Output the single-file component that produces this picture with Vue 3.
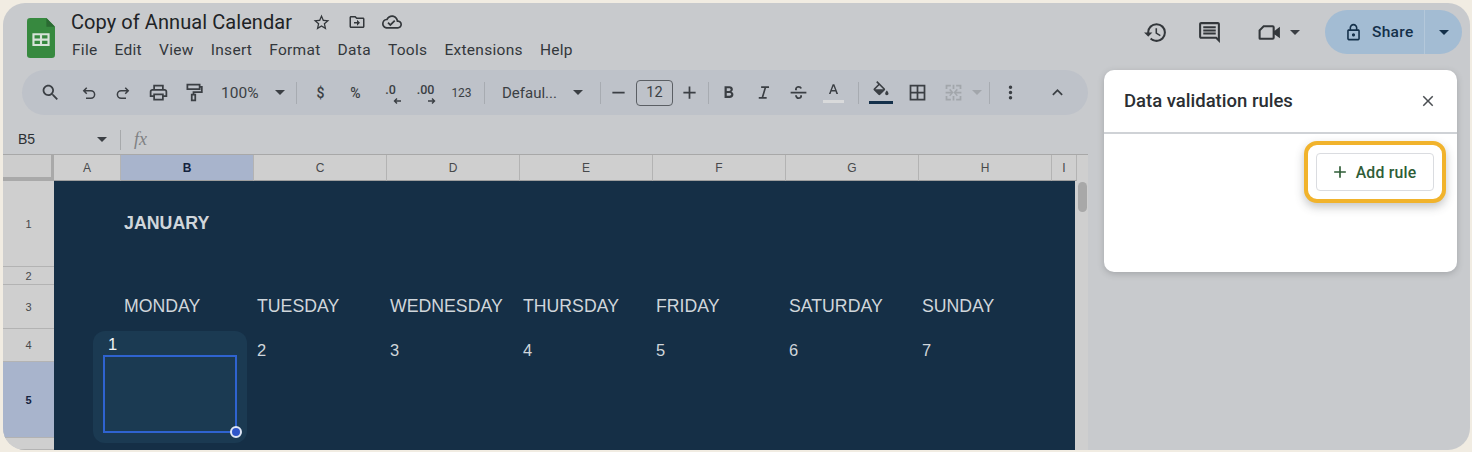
<template>
  <div class="screen">
    <div class="window">
      <!-- Title bar -->
      <header class="top">
        <svg class="logo" viewBox="0 0 26 37">
          <path d="M3 0h15l8 8v26a3 3 0 0 1-3 3H3a3 3 0 0 1-3-3V3a3 3 0 0 1 3-3z" fill="#37893f" />
          <path d="M18 0l8 8h-8z" fill="#2a6a32" />
          <path d="M6 15h14v10H6z" fill="none" stroke="#d8e3d9" stroke-width="2" />
          <path d="M13 15v10M6 20h14" stroke="#d8e3d9" stroke-width="2" />
        </svg>
        <div class="doc">
          <div class="title-row">
            <span class="title">Copy of Annual Calendar</span>
            <svg class="t-ic star" viewBox="0 0 24 24"><path :d="icons.star" /></svg>
            <svg class="t-ic move" viewBox="0 0 24 24"><path :d="icons.move" /></svg>
            <svg class="t-ic cloud" viewBox="0 0 24 24"><path :d="icons.cloud" /></svg>
          </div>
          <nav class="menu">
            <span v-for="m in menu" :key="m">{{ m }}</span>
          </nav>
        </div>
        <div class="actions">
          <svg class="a-ic" viewBox="0 0 24 24"><path :d="icons.history" /></svg>
          <svg class="a-ic comment" viewBox="0 0 24 24"><path :d="icons.comment" /></svg>
          <svg class="a-ic video" viewBox="0 0 24 24"><path :d="icons.video" /></svg>
          <i class="caret video-caret"></i>
          <div class="share">
            <div class="share-main">
              <svg class="lock" viewBox="0 0 24 24"><path :d="icons.lock" /></svg>
              <span>Share</span>
            </div>
            <div class="share-more"><i class="caret dark"></i></div>
          </div>
        </div>
      </header>

      <div class="main">
        <div class="left">
          <!-- Toolbar -->
          <div class="toolbar">
            <template v-for="(t, i) in tools" :key="i">
              <span v-if="t.sep" class="sep" :style="{ marginLeft: t.ml + 'px' }"></span>
              <span v-else class="tool" :class="t.cls" :style="{ width: (t.w || 35) + 'px', marginLeft: (t.ml || 0) + 'px' }">
                <svg v-if="t.icon" class="tool-ic" :class="t.icon" viewBox="0 0 24 24">
                  <path v-if="icons[t.icon]" :d="icons[t.icon]" />
                  <path v-if="strokes[t.icon]" :d="strokes[t.icon]" class="st" />
                </svg>
                <i v-else-if="t.caret" class="caret" :class="{ dim: t.dim }"></i>
                <template v-else>{{ t.text }}</template>
                <svg v-if="t.arrow" class="dec-arrow" viewBox="0 0 10 8">
                  <path :d="t.arrow" />
                </svg>
              </span>
            </template>
          </div>

          <!-- Formula bar -->
          <div class="formula">
            <span class="cell-name">B5</span>
            <i class="caret"></i>
            <span class="f-sep"></span>
            <span class="fx">fx</span>
          </div>

          <div class="sheet-wrap">
            <div class="grid">
              <div class="corner"></div>
              <div v-for="c in columns" :key="c" class="col-head" :class="{ active: c === 'B' }">{{ c }}</div>

              <div
                v-for="r in rows"
                :key="r.label"
                class="row-head"
                :class="{ active: r.label === '5' }"
                :style="{ gridRow: r.line }"
              >{{ r.label }}</div>

              <div class="sheet">
                <div class="month">JANUARY</div>
                <div v-for="(d, i) in days" :key="d" class="day" :style="{ gridColumn: i + 2 }">{{ d }}</div>
                <div v-for="n in dates" :key="n" class="date" :style="{ gridColumn: n + 1 }">{{ n }}</div>

                <div class="picked">
                  <span class="picked-num">1</span>
                  <div class="picked-box"><i class="handle"></i></div>
                </div>
              </div>
            </div>
            <div class="scrollbar"><i></i></div>
          </div>
        </div>

        <!-- Side panel -->
        <aside class="side">
          <div class="panel">
            <div class="panel-head">
              <span>Data validation rules</span>
              <svg class="close" viewBox="0 0 24 24"><path :d="icons.close" /></svg>
            </div>
            <div class="panel-body">
              <div class="callout">
                <button class="add">
                  <svg viewBox="0 0 24 24"><path d="M11 5h2v6h6v2h-6v6h-2v-6H5v-2h6z" /></svg>
                  Add rule
                </button>
              </div>
            </div>
          </div>
        </aside>
      </div>
    </div>
  </div>
</template>

<script setup>
const menu = ['File', 'Edit', 'View', 'Insert', 'Format', 'Data', 'Tools', 'Extensions', 'Help']
const columns = ['A', 'B', 'C', 'D', 'E', 'F', 'G', 'H', 'I']
const days = ['MONDAY', 'TUESDAY', 'WEDNESDAY', 'THURSDAY', 'FRIDAY', 'SATURDAY', 'SUNDAY']
const dates = [2, 3, 4, 5, 6, 7]
const rows = [
  { label: '1', line: 2 },
  { label: '2', line: 3 },
  { label: '3', line: 4 },
  { label: '4', line: 5 },
  { label: '5', line: 6 },
  { label: '', line: 7 }
]

const icons = {
  star: 'M22 9.24l-7.19-.62L12 2 9.19 8.63 2 9.24l5.46 4.73L5.82 21 12 17.27 18.18 21l-1.63-7.03L22 9.24zM12 15.4l-3.76 2.27 1-4.28-3.32-2.88 4.38-.38L12 6.1l1.71 4.04 4.38.38-3.32 2.88 1 4.28L12 15.4z',
  move: 'M20 6h-8l-2-2H4c-1.1 0-2 .9-2 2v12c0 1.1.9 2 2 2h16c1.1 0 2-.9 2-2V8c0-1.1-.9-2-2-2zm0 12H4V6h5.17l2 2H20v10zm-8-1l4-4-4-4v3H8v2h4v3z',
  cloud: 'M19.35 10.04C18.67 6.59 15.64 4 12 4 9.11 4 6.6 5.64 5.35 8.04 2.34 8.36 0 10.91 0 14c0 3.31 2.69 6 6 6h13c2.76 0 5-2.24 5-5 0-2.64-2.05-4.78-4.65-4.96zM19 18H6c-2.21 0-4-1.79-4-4 0-2.05 1.53-3.76 3.56-3.97l1.07-.11.5-.95C8.08 7.14 9.94 6 12 6c2.62 0 4.88 1.86 5.39 4.43l.3 1.5 1.53.11c1.56.1 2.78 1.41 2.78 2.96 0 1.65-1.35 3-3 3zm-9-3.82l-2.09-2.09L6.5 13.5 10 17l6.01-6.01-1.41-1.41z',
  history: 'M13 3a9 9 0 0 0-9 9H1l3.89 3.89.07.14L9 12H6c0-3.87 3.13-7 7-7s7 3.13 7 7-3.13 7-7 7c-1.93 0-3.68-.79-4.94-2.06l-1.42 1.42A8.954 8.954 0 0 0 13 21a9 9 0 0 0 0-18zm-1 5v5l4.28 2.54.72-1.21-3.5-2.08V8H12z',
  comment: 'M20 2H4c-1.1 0-2 .9-2 2v12c0 1.1.9 2 2 2h14l4 4V4c0-1.1-.9-2-2-2zm0 15.17L18.83 16H4V4h16v13.17zM6 12h12v2H6zm0-3h12v2H6zm0-3h12v2H6z',
  video: 'M6 5h9a2 2 0 0 1 2 2v3.2L22 6.5v11L17 13.8V17a2 2 0 0 1-2 2H3a1.5 1.5 0 0 1-1.5-1.5V9.5zM6.8 7 3.5 10.3V17H15V7z',
  lock: 'M18 8h-1V6c0-2.76-2.24-5-5-5S7 3.24 7 6v2H6c-1.1 0-2 .9-2 2v10c0 1.1.9 2 2 2h12c1.1 0 2-.9 2-2V10c0-1.1-.9-2-2-2zM9 6c0-1.66 1.34-3 3-3s3 1.34 3 3v2H9V6zm9 14H6V10h12v10zm-6-3c1.1 0 2-.9 2-2s-.9-2-2-2-2 .9-2 2 .9 2 2 2z',
  close: 'M19 6.41 17.59 5 12 10.59 6.41 5 5 6.41 10.59 12 5 17.59 6.41 19 12 13.41 17.59 19 19 17.59 13.41 12z',
  search: 'M15.5 14h-.79l-.28-.27C15.41 12.59 16 11.11 16 9.5 16 5.91 13.09 3 9.5 3S3 5.91 3 9.5 5.91 16 9.5 16c1.61 0 3.09-.59 4.23-1.57l.27.28v.79l5 4.99L20.49 19l-4.99-5zm-6 0C7.01 14 5 11.99 5 9.5S7.01 5 9.5 5 14 7.01 14 9.5 11.99 14 9.5 14z',
  print: 'M19 8h-1V3H6v5H5c-1.66 0-3 1.34-3 3v6h4v4h12v-4h4v-6c0-1.66-1.34-3-3-3zM8 5h8v3H8V5zm8 12v2H8v-4h8v2zm2-2v-2H6v2H4v-4c0-.55.45-1 1-1h14c.55 0 1 .45 1 1v4h-2z',
  minus: 'M5 11h14v2H5z',
  plus: 'M11 5h2v6h6v2h-6v6h-2v-6H5v-2h6z',
  bold: 'M7 4h6.2c2.6 0 4.3 1.5 4.3 3.8 0 1.4-.7 2.5-1.8 3.1 1.5.5 2.5 1.8 2.5 3.5 0 2.6-1.9 4.6-4.8 4.6H7zm2.8 2.5v3.6h3c1.2 0 1.9-.8 1.9-1.8s-.7-1.8-1.9-1.8zm0 6v3.5h3.4c1.4 0 2.2-.8 2.2-1.8s-.8-1.7-2.2-1.7z',
  italic: 'M9 4h10v2.4h-3.7l-3.4 11.2H16V20H6v-2.4h3.7l3.4-11.2H9z',
  strike: 'M3 11h18v2H3zM8.2 9.5c-.1-.3-.2-.7-.2-1C8 6 9.8 4.5 12.1 4.5c1.9 0 3.3 1 3.8 2.6l-1.9.7c-.3-.8-1-1.3-1.9-1.3-1.1 0-2 .6-2 1.6 0 .5.1.9.4 1.4zM8 15h2.2c.1 1.4 1 2.5 2 2.5s1.8-.7 1.8-1.6c0-.3-.1-.6-.2-.9h2.1c.1.3.2.7.2 1 0 2.1-1.6 3.5-4 3.5-2.3 0-3.9-1.8-4.1-4.5z',
  textA: 'M10.9 3h2.2l5 13h-2.3l-1.1-3.2H9.2L8.1 16H5.9zm-1 7.8h4.2L12 5.2z',
  fill: 'M16.56 8.94 7.62 0 6.21 1.41l2.38 2.38-5.15 5.15c-.59.59-.59 1.54 0 2.12l5.5 5.5c.29.29.68.44 1.06.44s.77-.15 1.06-.44l5.5-5.5c.59-.58.59-1.53 0-2.12zM5.21 10 10 5.21 14.79 10H5.21zM19 11.5s-2 2.17-2 3.5c0 1.1.9 2 2 2s2-.9 2-2c0-1.33-2-3.5-2-3.5z',
  borders: 'M3 3v18h18V3H3zm8 16H5v-6h6v6zm0-8H5V5h6v6zm8 8h-6v-6h6v6zm0-8h-6V5h6v6z',
  merge: 'M3 3h6v2H5v3H3zm12 0h6v5h-2V5h-4zM3 16h2v3h4v2H3zm16 0h2v5h-6v-2h4zM11 3h2v5h-2zm0 13h2v5h-2zM3 11h6l-2-2 1.2-1.2L12 12l-3.8 4.2L7 15l2-2H3zm18 2h-6l2 2-1.2 1.2L12 12l3.8-4.2L17 9l-2 2h6z',
  more: 'M12 8a2 2 0 1 0 0-4 2 2 0 0 0 0 4zm0 2a2 2 0 1 0 0 4 2 2 0 0 0 0-4zm0 6a2 2 0 1 0 0 4 2 2 0 0 0 0-4z',
  less: 'M12 8l-6 6 1.41 1.41L12 10.83l4.59 4.58L18 14z'
}

const strokes = {
  undo: 'M9 5 5 9l4 4M5 9h9.5a5 5 0 0 1 0 10H8',
  redo: 'M15 5l4 4-4 4M19 9H9.5a5 5 0 0 0 0 10H16',
  paint: 'M5 3h14v5H5zM19 5.5h2.5v6H12v3M10 14.5h4V21h-4z'
}

const leftArrow = 'M9 4H3M5 1.5 2.5 4 5 6.5'
const rightArrow = 'M1 4h6M5 1.5 7.5 4 5 6.5'

// widths and margins follow the spacing of the sheet toolbar
const tools = [
  { icon: 'search', ml: 0 },
  { icon: 'undo', ml: 3 },
  { icon: 'redo', ml: -1 },
  { icon: 'print', ml: 1 },
  { icon: 'paint' },
  { text: '100%', w: 40, ml: 10, cls: 'zoom' },
  { caret: true, w: 20, ml: 9 },
  { sep: true, ml: 6 },
  { text: '$', ml: 6, cls: 'fmt' },
  { text: '%', cls: 'fmt' },
  { text: '.0', cls: 'dec', arrow: leftArrow },
  { text: '.00', cls: 'dec', arrow: rightArrow },
  { text: '123', ml: 1, cls: 'num' },
  { sep: true, ml: 5 },
  { text: 'Defaul...', w: 60, ml: 17, cls: 'font' },
  { caret: true, w: 20, ml: 6 },
  { sep: true, ml: 12 },
  { icon: 'minus' },
  { text: '12', w: 37, cls: 'size' },
  { icon: 'plus', w: 32 },
  { sep: true, ml: 3 },
  { icon: 'bold', ml: 2 },
  { icon: 'italic' },
  { icon: 'strike' },
  { icon: 'textA' },
  { sep: true, ml: 7 },
  { icon: 'fill', ml: 4 },
  { icon: 'borders', ml: 2 },
  { icon: 'merge', ml: 1, cls: 'dimmed' },
  { caret: true, w: 12, dim: true },
  { sep: true, ml: 6 },
  { icon: 'more', ml: 3 },
  { icon: 'less', ml: 12 }
]
</script>

<style>
html, body {
  margin: 0;
  background: #f1ece2;
}
</style>

<style scoped>
.screen {
  box-sizing: border-box;
  width: 1472px;
  height: 452px;
  padding: 3px 2px 2px 3px;
  background: #f1ece2;
  overflow: hidden;
  font-family: Roboto, "Liberation Sans", sans-serif;
  color: #2b2f33;
}

.window {
  height: 100%;
  display: flex;
  flex-direction: column;
  background: #c8cacd;
  border-radius: 22px;
  overflow: hidden;
}

/* Title bar */
.top {
  flex: none;
  height: 67px;
  display: flex;
  align-items: flex-start;
}

.logo {
  width: 28px;
  height: 40px;
  margin: 15px 0 0 24px;
  flex: none;
}

.doc {
  margin-left: 16px;
  padding-top: 7px;
}

.title-row {
  display: flex;
  align-items: center;
  height: 24px;
}

.title {
  font-size: 20px;
  letter-spacing: 0.07px;
  color: #202326;
}

.t-ic {
  fill: #33373b;
  flex: none;
}

.star {
  width: 19px;
  height: 19px;
  margin-left: 20px;
}

.move {
  width: 18px;
  height: 18px;
  margin-left: 17px;
}

.cloud {
  width: 20px;
  height: 20px;
  margin-left: 16px;
}

.menu {
  display: flex;
  gap: 17px;
  margin: 7px 0 0 1px;
  font-size: 15.5px;
  letter-spacing: 0.3px;
  color: #33373b;
}

.actions {
  margin-left: auto;
  padding: 7px 8px 0 0;
  display: flex;
  align-items: center;
  height: 44px;
}

.a-ic {
  width: 25px;
  height: 25px;
  fill: #33373b;
  flex: none;
}

.comment {
  margin-left: 29px;
}

.video {
  margin-left: 35px;
}

.video-caret {
  margin: 0 25px 0 8px;
}

.caret {
  display: block;
  width: 0;
  height: 0;
  border: 5px solid transparent;
  border-top-color: #3b3f44;
  border-bottom: 0;
}

.caret.dark {
  border-top-color: #14304a;
}

.caret.dim {
  border-top-color: #a2a6ab;
}

.share {
  width: 137px;
  height: 44px;
  display: flex;
  background: #a3bcd3;
  border-radius: 22px;
  color: #14304a;
}

.share-main {
  width: 99px;
  display: flex;
  align-items: center;
  font-size: 15.5px;
  font-weight: 500;
  letter-spacing: 0.3px;
  border-right: 1px solid #b4c8da;
}

.lock {
  width: 19px;
  height: 19px;
  fill: #14304a;
  margin: 0 9px 0 19px;
}

.share-more {
  flex: 1;
  display: flex;
  align-items: center;
  justify-content: center;
}

/* Main area */
.main {
  flex: 1;
  min-height: 0;
  display: flex;
}

.left {
  width: 1085px;
  flex: none;
  display: flex;
  flex-direction: column;
}

.toolbar {
  flex: none;
  height: 45px;
  margin-left: 19px;
  padding-left: 11px;
  display: flex;
  align-items: center;
  background: #bec2c9;
  border-radius: 23px;
  color: #3b3f44;
}

.sep {
  flex: none;
  width: 1px;
  height: 22px;
  background: #a7abb1;
}

.tool {
  flex: none;
  position: relative;
  height: 28px;
  display: flex;
  align-items: center;
  justify-content: center;
  font-size: 15px;
}

.tool-ic {
  width: 21px;
  height: 21px;
  fill: #3b3f44;
}

.tool-ic .st {
  fill: none;
  stroke: #3b3f44;
  stroke-width: 2;
}

.tool-ic.undo,
.tool-ic.redo {
  width: 18px;
  height: 18px;
}

.zoom {
  font-size: 15.5px;
  justify-content: flex-start;
}

.fmt {
  font-size: 14px;
  font-weight: 500;
}

.num {
  font-size: 12px;
}

.dec {
  font-size: 12.5px;
  font-weight: 500;
  padding-bottom: 7px;
  box-sizing: border-box;
}

.dec-arrow {
  position: absolute;
  left: 19px;
  top: 18px;
  width: 10px;
  height: 8px;
  fill: none;
  stroke: #3b3f44;
  stroke-width: 1.4;
}

.font {
  justify-content: flex-start;
  white-space: nowrap;
}

.size {
  box-sizing: border-box;
  height: 26px;
  border: 1px solid #5b5f64;
  border-radius: 4px;
  font-size: 14.5px;
}

.dimmed .tool-ic {
  fill: #a2a6ab;
}

.tool-ic.textA {
  border-bottom: 3px solid #d9dadb;
  box-sizing: border-box;
}

.tool-ic.fill {
  border-bottom: 3px solid #14304a;
  box-sizing: content-box;
  width: 24px;
  height: 20px;
}

.tool-ic.bold,
.tool-ic.italic {
  width: 19px;
  height: 19px;
}

/* Formula bar */
.formula {
  flex: none;
  height: 29px;
  margin-top: 10px;
  display: flex;
  align-items: center;
  font-family: "Liberation Sans", sans-serif;
}

.cell-name {
  width: 94px;
  padding: 0 0 2px 15px;
  box-sizing: border-box;
  font-size: 14px;
  flex: none;
}

.f-sep {
  width: 1px;
  height: 20px;
  background: #a7a9ab;
  margin-left: 13px;
}

.fx {
  margin-left: 13px;
  font-family: "Liberation Serif", serif;
  font-style: italic;
  font-size: 18px;
  color: #7f8183;
}

/* Grid */
.sheet-wrap {
  flex: 1;
  min-height: 0;
  display: flex;
  overflow: hidden;
}

.grid {
  flex: none;
  display: grid;
  grid-template-columns: 51px 67px repeat(7, 133px) 25px;
  grid-template-rows: 26px 86px 18px 44px 33px 76px 1fr;
  background: #cfcfcf;
  font-family: "Liberation Sans", sans-serif;
  font-size: 12px;
  color: #47494b;
  border-top: 1px solid #a8a8a8;
  box-sizing: border-box;
}

.corner {
  box-sizing: border-box;
  background: #cdcdcd;
  border-right: 3px solid #a9a9a9;
  border-bottom: 4px solid #a9a9a9;
}

.col-head {
  display: flex;
  align-items: center;
  justify-content: center;
  border-right: 1px solid #b3b3b3;
  border-bottom: 1px solid #9e9e9e;
}

.col-head.active {
  background: #a8b4cc;
  color: #14233f;
  font-weight: 700;
}

.row-head {
  grid-column: 1;
  display: flex;
  align-items: center;
  justify-content: center;
  font-size: 11px;
  border-bottom: 1px solid #b3b3b3;
}

.row-head.active {
  background: #a8b4cc;
  color: #14233f;
  font-weight: 700;
}

.sheet {
  grid-column: 2 / -1;
  grid-row: 2 / -1;
  position: relative;
  display: grid;
  grid-template-columns: subgrid;
  grid-template-rows: subgrid;
  margin-right: 2px;
  background: #152f46;
  color: #d0d6db;
  font-size: 17.7px;
}

.month {
  grid-column: 2;
  grid-row: 1;
  align-self: center;
  padding: 0 0 2px 3px;
  font-size: 17.8px;
  font-weight: 700;
}

.day {
  grid-row: 3;
  align-self: center;
  padding: 0 0 1px 3px;
  white-space: nowrap;
}

.date {
  grid-row: 4;
  align-self: end;
  padding: 0 0 2px 3px;
  font-size: 16.5px;
}

.picked {
  position: absolute;
  left: 39px;
  top: 150px;
  width: 154px;
  height: 112px;
  box-sizing: border-box;
  padding: 3px 10px 0;
  background: #1b3a52;
  border-radius: 12px;
  display: flex;
  flex-direction: column;
  color: #f2f4f5;
  font-size: 16.5px;
}

.picked-num {
  height: 21px;
  line-height: 20px;
  padding-left: 5px;
}

.picked-box {
  position: relative;
  width: 134px;
  height: 78px;
  box-sizing: border-box;
  border: 2.5px solid #2f63d0;
}

.handle {
  position: absolute;
  right: -7px;
  bottom: -7px;
  width: 8px;
  height: 8px;
  background: #2f55c9;
  border: 2px solid #dfe6f5;
  border-radius: 50%;
}

.scrollbar {
  flex: 1;
  background: #cfcfcf;
  padding: 1px 1px 0;
  border-top: 1px solid #a8a8a8;
}

.scrollbar i {
  display: block;
  margin-top: 26px;
  height: 30px;
  background: #a8a8a8;
  border-radius: 5px;
}

/* Side panel */
.side {
  flex: 1;
  padding-left: 16px;
}

.panel {
  width: 353px;
  height: 202px;
  background: #fff;
  border-radius: 10px;
  box-shadow: 0 2px 6px rgba(60, 64, 67, 0.25);
  overflow: hidden;
}

.panel-head {
  height: 64px;
  box-sizing: border-box;
  padding: 0 20px 0 20px;
  border-bottom: 2px solid #cfd2d6;
  display: flex;
  align-items: center;
  justify-content: space-between;
  font-size: 18.5px;
  font-weight: 500;
  color: #2b2f33;
}

.close {
  width: 18px;
  height: 18px;
  fill: #4a4e52;
}

.panel-body {
  display: flex;
  justify-content: flex-end;
  padding: 7px 11px 0 0;
}

.callout {
  box-sizing: border-box;
  width: 142px;
  height: 62px;
  padding: 8px;
  border: 4px solid #f1b32c;
  border-radius: 13px;
  box-shadow: 0 4px 10px rgba(60, 64, 67, 0.3);
  background: #fff;
}

.add {
  width: 118px;
  height: 38px;
  box-sizing: border-box;
  display: flex;
  align-items: center;
  justify-content: center;
  gap: 6px;
  padding: 0 4px 0 0;
  background: #fff;
  border: 1px solid #dadce0;
  border-radius: 4px;
  color: #2f5d37;
  font-family: Roboto, sans-serif;
  font-size: 15.8px;
  font-weight: 500;
  letter-spacing: 0.2px;
}

.add svg {
  width: 20px;
  height: 20px;
  fill: #2f5d37;
}
</style>
